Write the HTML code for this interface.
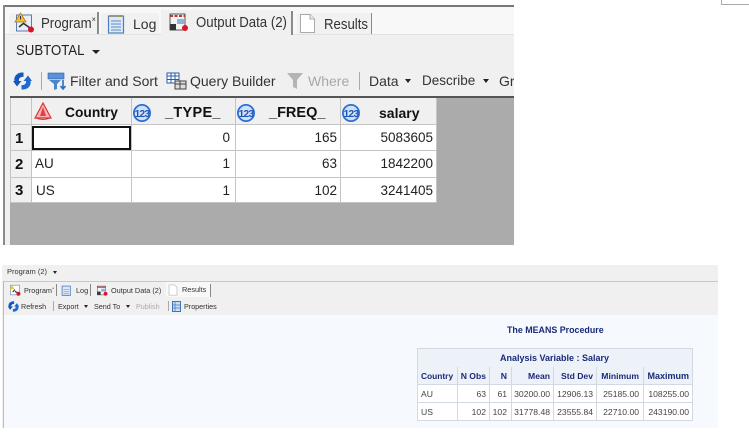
<!DOCTYPE html>
<html><head><meta charset="utf-8">
<style>
html,body{margin:0;padding:0;background:#fff}
#p{position:relative;width:749px;height:448px;overflow:hidden;background:#fff;font-family:"Liberation Sans",sans-serif;color:#222}
#p div,#p span.t,#p svg{position:absolute}
.t{position:absolute;white-space:nowrap;line-height:1}
.n{transform-origin:0 0;transform:scaleX(.91)}
.hd{font-weight:bold;color:#111;font-size:14.5px}
.c{font-size:13.5px;color:#222}
.b{background:#c4c4c4}
.s{font-size:7.3px;color:#333}
.h2{font-weight:bold;color:#1b2a78;font-size:8.6px}
.d{font-size:8.6px;color:#444}
</style></head><body><div id="p">

<svg width="0" height="0" style="position:absolute"><defs>
<g id="n"><circle cx="8" cy="8" r="7.2" fill="#cfe0f8" stroke="#2c6fd6" stroke-width="1.6"/><text x="8" y="11.500" font-family="Liberation Sans" font-size="9" font-weight="bold" text-anchor="middle" letter-spacing="-.6" fill="#1f55b5">123</text></g>
<g id="sync"><path d="M10 0.500C4 0 0 4 1 9L-0.500 9L3.500 14.500L8 9L5.500 9C5 6.500 7 4.500 10 5Z" fill="#1559bd"/><path d="M8 17.500C14 18 18 14 17 9L18.500 9L14.500 3.500L10 9L12.500 9C13 11.500 11 13.500 8 13Z" fill="#1e6ad0"/></g>
</defs></svg>

<!-- corner -->
<div style="left:721px;top:0;width:1px;height:5px;background:#aaa"></div>
<div style="left:721px;top:4px;width:28px;height:1px;background:#aaa"></div>

<!-- TOP PANEL -->
<div style="left:3px;top:5px;width:511px;height:240px;background:#f0f0f0"></div>
<div style="left:3px;top:5px;width:511px;height:2px;background:#777"></div>
<div style="left:3px;top:5px;width:2px;height:240px;background:#8a8a8a"></div>
<div style="left:5px;top:7px;width:509px;height:28px;background:#f8f8f8"></div>
<div style="left:5px;top:34px;width:509px;height:1px;background:#e2e2e2"></div>

<!-- tabs -->
<div style="left:9px;top:13px;width:89px;height:21px;background:#f1f1f1"></div>
<div style="left:101px;top:13px;width:58px;height:21px;background:#f1f1f1"></div>
<div style="left:161px;top:10px;width:130px;height:25px;background:#f0f0f0"></div>
<div style="left:297px;top:13px;width:74px;height:21px;background:#f1f1f1"></div>
<div style="left:97px;top:12px;width:2px;height:22px;background:#8b8b8b"></div>
<div style="left:291px;top:11px;width:2px;height:24px;background:#8b8b8b"></div>
<div style="left:371px;top:13px;width:1px;height:21px;background:#8b8b8b"></div>

<svg style="left:14px;top:12px" width="21" height="21" viewBox="0 0 21 21"><rect x="2.500" y="3" width="15" height="16" fill="#e8eef8" stroke="#5a7bb0"/><path d="M1 10L6.500 1L12 10Z" fill="#f2c230" stroke="#a87a10" stroke-width=".8"/><path d="M6.500 4V7.500" stroke="#333"/><path d="M5 15L10 11M9 11L16 16" stroke="#333" stroke-width="1.600" fill="none"/><circle cx="17" cy="17.500" r="3" fill="#d8142a"/></svg>
<span class="t n" style="left:41px;top:17px;font-size:14.500px;color:#333">Program<sup style="font-size:8px;line-height:0">×</sup></span>
<svg style="left:107px;top:14px" width="19" height="20" viewBox="0 0 19 20"><rect x="1.500" y="2" width="15" height="17" fill="#dbe9fa" stroke="#4f7fc0" stroke-width="1.200"/><path d="M4 7H14M4 10H14M4 13H14M4 16H14" stroke="#5f8ac6"/><path d="M3 2H15" stroke="#a88c30" stroke-width="2" stroke-dasharray="1.500 1"/></svg>
<span class="t" style="left:133px;top:17px;font-size:14px;color:#333">Log</span>
<svg style="left:168px;top:12px" width="21" height="20" viewBox="0 0 21 20"><rect x="2" y="2" width="15" height="16" fill="#f4f4f4" stroke="#555"/><path d="M2 4H17" stroke="#b23a3a" stroke-width="2" stroke-dasharray="3 1.500"/><rect x="9" y="7" width="7" height="5" fill="#8db2e0"/><rect x="2" y="12" width="6" height="6" fill="#333"/><circle cx="17" cy="16" r="3" fill="#d8142a"/></svg>
<span class="t n" style="left:196px;top:16px;font-size:14.500px;color:#333">Output Data (2)</span>
<svg style="left:299px;top:13px" width="17" height="21" viewBox="0 0 17 21"><path d="M1.500 1.500H11L15.500 6V19.500H1.500Z" fill="#fff" stroke="#aaa"/><path d="M11 1.500V6H15.500" fill="#eee" stroke="#aaa"/></svg>
<span class="t n" style="left:324px;top:18px;font-size:14.500px;color:#333">Results</span>

<span class="t n" style="left:16px;top:44px;font-size:14.500px;color:#222">SUBTOTAL</span>
<div style="left:92px;top:50px;width:0;height:0;border:4px solid transparent;border-top:4px solid #222;border-bottom:0"></div>

<!-- toolbar -->
<svg style="left:13px;top:72px" width="19" height="18" viewBox="0 0 18 18"><use href="#sync"/></svg>
<div style="left:41px;top:72px;width:1px;height:18px;background:#aaa"></div>
<svg style="left:47px;top:71px" width="20" height="20" viewBox="0 0 20 20"><rect x="1" y="2" width="16" height="6" fill="#5c8fd6" stroke="#2b5fae" stroke-width=".6"/><path d="M2 9H14L10 13V18L7 19V13Z" fill="#4a86cc"/><path d="M16 9V17M13.500 15L16 18L18.500 15" stroke="#2a6fc0" stroke-width="1.600" fill="none"/></svg>
<span class="t" style="left:70px;top:74px;font-size:14px;color:#333">Filter and Sort</span>
<svg style="left:166px;top:72px" width="21" height="18" viewBox="0 0 21 18"><rect x="1" y="1" width="12" height="10" fill="#fff" stroke="#2a5db0"/><path d="M1 4H13M1 7.500H13M5 1V11M9 1V11" stroke="#2a5db0"/><rect x="9" y="9" width="11" height="8" fill="#ddd" stroke="#444"/><path d="M9 12H20M14 9V17" stroke="#444"/></svg>
<span class="t" style="left:190px;top:74px;font-size:14px;color:#333">Query Builder</span>
<svg style="left:286px;top:72px" width="18" height="18" viewBox="0 0 18 18"><path d="M1 1H17L11 8V17L7 15V8Z" fill="#b4b4b4"/></svg>
<span class="t" style="left:308px;top:74px;font-size:14px;color:#a8a8a8">Where</span>
<div style="left:359px;top:72px;width:1px;height:18px;background:#aaa"></div>
<span class="t" style="left:369px;top:74px;font-size:14px;color:#333">Data</span>
<div style="left:405px;top:79px;width:0;height:0;border:3.500px solid transparent;border-top:4px solid #222;border-bottom:0"></div>
<span class="t" style="left:422px;top:74px;font-size:13.500px;color:#333">Describe</span>
<div style="left:483px;top:79px;width:0;height:0;border:3.500px solid transparent;border-top:4px solid #222;border-bottom:0"></div>
<span class="t" style="left:499px;top:74px;font-size:14px;color:#333;width:15px;overflow:hidden">Gr</span>

<!-- grid -->
<div style="left:10px;top:96px;width:504px;height:149px;background:#ababab"></div>
<div style="left:10px;top:96px;width:504px;height:2px;background:#555"></div>
<div style="left:10px;top:98px;width:427px;height:105px;background:#fff"></div>
<div style="left:10px;top:98px;width:427px;height:26px;background:#f0f0f0"></div>
<div style="left:10px;top:98px;width:22px;height:105px;background:#f0f0f0"></div>
<div class="b" style="left:10px;top:124px;width:427px;height:1px"></div>
<div class="b" style="left:10px;top:150px;width:427px;height:1px"></div>
<div class="b" style="left:10px;top:177px;width:427px;height:1px"></div>
<div class="b" style="left:10px;top:202px;width:427px;height:1px"></div>
<div class="b" style="left:10px;top:98px;width:1px;height:105px"></div>
<div class="b" style="left:31px;top:98px;width:1px;height:105px"></div>
<div class="b" style="left:131px;top:98px;width:1px;height:105px"></div>
<div class="b" style="left:235px;top:98px;width:1px;height:105px"></div>
<div class="b" style="left:340px;top:98px;width:1px;height:105px"></div>
<div class="b" style="left:436px;top:98px;width:1px;height:105px"></div>

<svg style="left:33px;top:101px" width="20" height="20" viewBox="0 0 20 20"><path d="M10 2L18 17H2Z" fill="#f8b4b4" stroke="#d33" stroke-width="1.200"/><path d="M10 6L7 15H13Z" fill="#e24040"/><path d="M3 17Q10 20 17 17" stroke="#d33" fill="none"/></svg>
<span class="t hd" style="left:65px;top:106px;font-size:13.800px">Country</span>
<svg style="left:133px;top:104px" width="18" height="18" viewBox="0 0 16 16"><use href="#n"/></svg>
<span class="t hd" style="left:165px;top:106px;letter-spacing:.3px">_TYPE_</span>
<svg style="left:237px;top:104px" width="18" height="18" viewBox="0 0 16 16"><use href="#n"/></svg>
<span class="t hd" style="left:269px;top:106px">_FREQ_</span>
<svg style="left:342px;top:104px" width="18" height="18" viewBox="0 0 16 16"><use href="#n"/></svg>
<span class="t hd" style="left:379px;top:106px;font-size:14px">salary</span>

<span class="t" style="left:15px;top:131px;font-weight:bold;font-size:15px;color:#111">1</span>
<span class="t" style="left:15px;top:157px;font-weight:bold;font-size:15px;color:#111">2</span>
<span class="t" style="left:15px;top:183px;font-weight:bold;font-size:15px;color:#111">3</span>
<div style="left:32px;top:126px;width:95px;height:20px;border:2px solid #111"></div>
<span class="t c" style="left:35px;top:157px">AU</span>
<span class="t c" style="left:36px;top:184px">US</span>
<span class="t c" style="right:519px;top:131px">0</span>
<span class="t c" style="right:519px;top:157px">1</span>
<span class="t c" style="right:519px;top:184px">1</span>
<span class="t c" style="right:412px;top:131px">165</span>
<span class="t c" style="right:412px;top:157px">63</span>
<span class="t c" style="right:412px;top:184px">102</span>
<span class="t c" style="right:316px;top:131px">5083605</span>
<span class="t c" style="right:316px;top:157px">1842200</span>
<span class="t c" style="right:316px;top:184px">3241405</span>

<!-- BOTTOM PANEL -->
<div style="left:2px;top:265px;width:716px;height:163px;background:#f0f0f0"></div>
<div style="left:3px;top:281px;width:715px;height:1px;background:#c8c8c8"></div>
<div style="left:3px;top:281px;width:1px;height:147px;background:#bbb"></div>
<div style="left:4px;top:315px;width:714px;height:113px;background:#f6f9fd"></div>
<span class="t" style="left:7px;top:268px;font-size:7.500px;color:#333">Program (2)</span>
<div style="left:53px;top:271px;width:0;height:0;border:2px solid transparent;border-top:3px solid #222;border-bottom:0"></div>

<svg style="left:9px;top:284px" width="12" height="12" viewBox="0 0 20 21"><rect x="2" y="2" width="16" height="17" fill="#fff" stroke="#5a7bb0"/><path d="M1 9L5 2L9 9Z" fill="#f2c230"/><path d="M6 14L10 10M10 13L16 16" stroke="#333" stroke-width="2"/><circle cx="16" cy="17" r="3.500" fill="#d8142a"/></svg>
<span class="t s" style="left:24px;top:286.500px">Program<sup style="font-size:4px;line-height:0">×</sup></span>
<div style="left:56px;top:284px;width:1px;height:12px;background:#888"></div>
<svg style="left:61px;top:285px" width="11" height="11" viewBox="0 0 19 20"><rect x="1.500" y="2" width="15" height="17" fill="#dbe9fa" stroke="#4f7fc0" stroke-width="1.500"/><path d="M4 8H14M4 12H14M4 16H14" stroke="#5f8ac6"/></svg>
<span class="t s" style="left:76px;top:286.500px">Log</span>
<div style="left:90px;top:284px;width:1px;height:12px;background:#888"></div>
<svg style="left:96px;top:285px" width="12" height="11" viewBox="0 0 21 20"><rect x="2" y="2" width="15" height="16" fill="#f4f4f4" stroke="#555"/><path d="M2 4H17" stroke="#b23a3a" stroke-width="2"/><rect x="9" y="7" width="7" height="5" fill="#8db2e0"/><rect x="2" y="12" width="6" height="6" fill="#333"/><circle cx="17" cy="16" r="3.500" fill="#d8142a"/></svg>
<span class="t s" style="left:111px;top:286.500px">Output Data (2)</span>
<div style="left:166px;top:282px;width:44px;height:15px;background:#f8f8f8"></div>
<svg style="left:168px;top:284px" width="10" height="12" viewBox="0 0 17 21"><path d="M1.500 1.500H11L15.500 6V19.500H1.500Z" fill="#fff" stroke="#aaa"/></svg>
<span class="t s" style="left:182px;top:285.500px">Results</span>
<div style="left:210px;top:284px;width:1px;height:13px;background:#888"></div>

<svg style="left:8px;top:301px" width="11" height="11" viewBox="0 0 18 18"><use href="#sync"/></svg>
<span class="t s" style="left:21px;top:302.500px;font-size:7.200px">Refresh</span>
<div style="left:53px;top:301px;width:1px;height:10px;background:#aaa"></div>
<span class="t s" style="left:58px;top:302.500px;font-size:7.200px">Export</span>
<div style="left:84px;top:305px;width:0;height:0;border:2px solid transparent;border-top:3px solid #222;border-bottom:0"></div>
<span class="t s" style="left:94px;top:302.500px;font-size:7.200px">Send To</span>
<div style="left:126px;top:305px;width:0;height:0;border:2px solid transparent;border-top:3px solid #222;border-bottom:0"></div>
<span class="t s" style="left:136px;top:302.500px;font-size:7.200px;color:#aaa">Publish</span>
<div style="left:168px;top:301px;width:1px;height:10px;background:#aaa"></div>
<svg style="left:172px;top:301px" width="9" height="11" viewBox="0 0 9 11"><rect x=".5" y=".5" width="8" height="10" fill="#cfe0f5" stroke="#3f74bd"/><path d="M3 1V10M1 4H8M1 7H8" stroke="#3f74bd" stroke-width=".7"/></svg>
<span class="t s" style="left:184px;top:302.500px;font-size:7.200px">Properties</span>

<span class="t" style="left:507px;top:326px;font-weight:bold;font-size:8.900px;color:#1b2a78">The MEANS Procedure</span>

<!-- means table -->
<div style="left:417px;top:348px;width:276px;height:73px;background:#d3d9e2"></div>
<div style="left:418px;top:349px;width:274px;height:17.500px;background:#edf2f9"></div>
<div style="left:418px;top:367px;width:39px;height:17px;background:#edf2f9"></div>
<div style="left:458px;top:367px;width:30.500px;height:17px;background:#edf2f9"></div>
<div style="left:489.500px;top:367px;width:21px;height:17px;background:#edf2f9"></div>
<div style="left:511.500px;top:367px;width:41.500px;height:17px;background:#edf2f9"></div>
<div style="left:554px;top:367px;width:42px;height:17px;background:#edf2f9"></div>
<div style="left:597px;top:367px;width:46px;height:17px;background:#edf2f9"></div>
<div style="left:644px;top:367px;width:48px;height:17px;background:#edf2f9"></div>
<div style="left:418px;top:385px;width:39px;height:17px;background:#fff"></div>
<div style="left:458px;top:385px;width:30.500px;height:17px;background:#fff"></div>
<div style="left:489.500px;top:385px;width:21px;height:17px;background:#fff"></div>
<div style="left:511.500px;top:385px;width:41.500px;height:17px;background:#fff"></div>
<div style="left:554px;top:385px;width:42px;height:17px;background:#fff"></div>
<div style="left:597px;top:385px;width:46px;height:17px;background:#fff"></div>
<div style="left:644px;top:385px;width:48px;height:17px;background:#fff"></div>
<div style="left:418px;top:403px;width:39px;height:17px;background:#fff"></div>
<div style="left:458px;top:403px;width:30.500px;height:17px;background:#fff"></div>
<div style="left:489.500px;top:403px;width:21px;height:17px;background:#fff"></div>
<div style="left:511.500px;top:403px;width:41.500px;height:17px;background:#fff"></div>
<div style="left:554px;top:403px;width:42px;height:17px;background:#fff"></div>
<div style="left:597px;top:403px;width:46px;height:17px;background:#fff"></div>
<div style="left:644px;top:403px;width:48px;height:17px;background:#fff"></div>

<span class="t h2" style="left:500px;top:354px;font-size:9px">Analysis Variable : Salary</span>
<span class="t h2" style="left:421px;top:372px;font-size:8.400px">Country</span>
<span class="t h2" style="right:263px;top:372px">N Obs</span>
<span class="t h2" style="right:242px;top:372px">N</span>
<span class="t h2" style="right:199px;top:372px">Mean</span>
<span class="t h2" style="right:156px;top:372px">Std Dev</span>
<span class="t h2" style="right:110px;top:372px">Minimum</span>
<span class="t h2" style="right:60px;top:372px;font-size:9px">Maximum</span>

<span class="t d" style="left:421px;top:390px">AU</span>
<span class="t d" style="right:263px;top:390px">63</span>
<span class="t d" style="right:242px;top:390px">61</span>
<span class="t d" style="right:199px;top:390px">30200.00</span>
<span class="t d" style="right:156px;top:390px">12906.13</span>
<span class="t d" style="right:110px;top:390px">25185.00</span>
<span class="t d" style="right:60px;top:390px">108255.00</span>
<span class="t d" style="left:421px;top:408px">US</span>
<span class="t d" style="right:263px;top:408px">102</span>
<span class="t d" style="right:242px;top:408px">102</span>
<span class="t d" style="right:199px;top:408px">31778.48</span>
<span class="t d" style="right:156px;top:408px">23555.84</span>
<span class="t d" style="right:110px;top:408px">22710.00</span>
<span class="t d" style="right:60px;top:408px">243190.00</span>

</div></body></html>
